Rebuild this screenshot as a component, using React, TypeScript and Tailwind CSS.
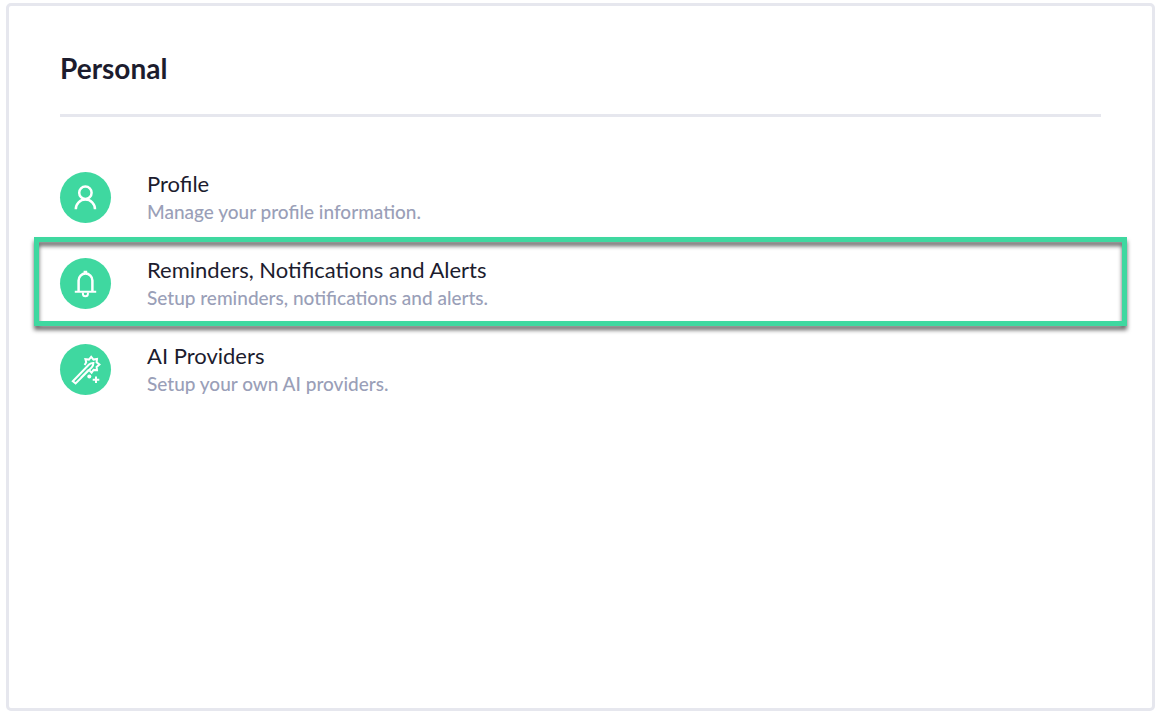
import React from 'react';

interface SettingItem {
  title: string;
  description: string;
  icon: React.ReactNode;
  highlighted?: boolean;
}

const ProfileIcon = () => (
  <>
    <circle cx="25.4" cy="20.8" r="6.2" />
    <path d="M15.8 37.2a9.6 9.6 0 0 1 19.2 0" />
  </>
);

const BellIcon = () => (
  <>
    <path d="M14.8 33.7h21.4" strokeWidth="2" />
    <path d="M18.6 33.5V22.4a6.9 6.9 0 0 1 13.8 0v11.1" />
    <path d="M23.6 14.2h3.6" strokeWidth="3" />
    <path d="M22.9 34.5v1.2a2.5 2.5 0 0 0 5 0v-1.2" strokeWidth="2" />
  </>
);

const WandIcon = () => (
  <>
    <path
      d="M24.6 20.9L26.2 18.3 25.4 15.2 28.9 15.6 31.2 12.9 33.5 15.6 37 15 36.6 18.3 39.4 20.6 36.6 22.9 37 26.2 33.6 25.9 31.6 28.6 29.6 26.6"
      strokeWidth="2"
    />
    <path d="M12.8 37.2L29 20.6Q31 18.9 33.4 19Q33.4 21.4 31.7 23.4L15.6 39.4z" strokeWidth="2" />
    <path d="M20.5 33.3l8-8.2" strokeWidth="1" />
    <circle cx="29.3" cy="32.5" r="2" fill="white" stroke="none" />
    <path d="M36 32.4v6.6M32.7 35.7h6.6" strokeWidth="2" />
  </>
);

const items: SettingItem[] = [
  {
    title: 'Profile',
    description: 'Manage your profile information.',
    icon: <ProfileIcon />,
  },
  {
    title: 'Reminders, Notifications and Alerts',
    description: 'Setup reminders, notifications and alerts.',
    icon: <BellIcon />,
    highlighted: true,
  },
  {
    title: 'AI Providers',
    description: 'Setup your own AI providers.',
    icon: <WandIcon />,
  },
];

const SettingRow: React.FC<{ item: SettingItem }> = ({ item }) => (
  <li className="relative">
    <a href="#" className="flex h-[86px] items-center gap-9">
      <svg
        viewBox="0 0 51 51"
        className="size-[51px] shrink-0 rounded-full bg-[#3fd8a0]"
        fill="none"
        stroke="white"
        strokeWidth="2.5"
        aria-hidden="true"
      >
        {item.icon}
      </svg>
      <div className="pt-0.5">
        <h3 className="text-[22px] leading-7 text-[#1c1c2e]">{item.title}</h3>
        <p className="text-[19px] leading-7 font-medium text-[#9a9fb8]">{item.description}</p>
      </div>
    </a>
    {item.highlighted && (
      <div className="pointer-events-none absolute -inset-x-6.5 -top-[3px] bottom-0 border-5 border-[#3fd8a0] drop-shadow-[0_4px_2px_rgba(0,0,0,0.6)]" />
    )}
  </li>
);

export default function App() {
  return (
    <main className="flex min-h-screen bg-white pt-[3px] pr-[5px] pb-[9px] pl-1.5 font-['Lato','Open_Sans',sans-serif]">
      <section className="flex-1 rounded-[5px] border-3 border-[#e6e7ee] px-[51px] pt-11">
        <h2 className="border-b-3 border-[#e6e7ee] pb-7 text-[28px] leading-9 font-bold text-[#1c1c2e]">
          Personal
        </h2>
        <ul className="pt-[37px]">
          {items.map((item) => (
            <SettingRow key={item.title} item={item} />
          ))}
        </ul>
      </section>
    </main>
  );
}
